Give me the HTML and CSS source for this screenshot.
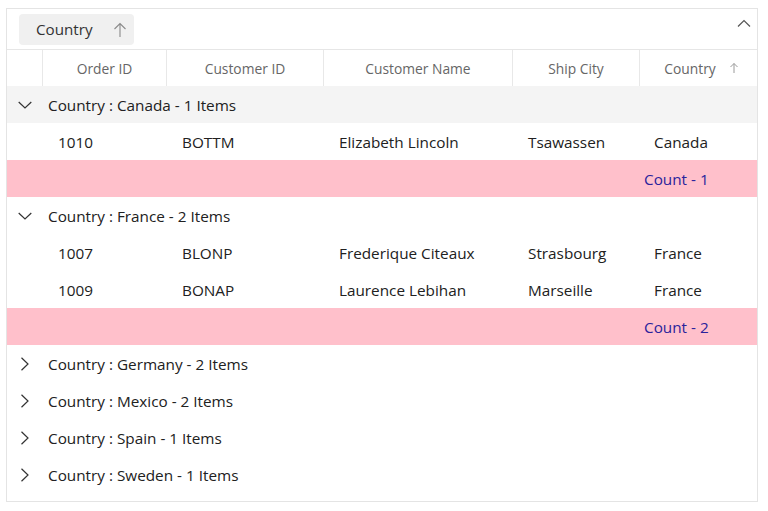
FILE: index.html
```html
<!DOCTYPE html>
<html>
<head>
<meta charset="utf-8">
<link rel="stylesheet" href="styles.css">
</head>
<body>
<div class="grid">
  <div class="drop">
    <div class="chip">
      <span class="chip-text">Country</span>
      <svg class="chip-arrow" width="14" height="16" viewBox="0 0 14 16"><path d="M7 15V1.5M1.5 7L7 1.5L12.5 7" fill="none" stroke="#8a8a8a" stroke-width="1.1"/></svg>
    </div>
    <svg class="collapse" width="14" height="9" viewBox="0 0 14 9"><path d="M1 7.5L7 1.5L13 7.5" fill="none" stroke="#555" stroke-width="1.2"/></svg>
  </div>
  <div class="row header">
    <div class="cell indent"></div>
    <div class="cell hc">Order ID</div>
    <div class="cell hc">Customer ID</div>
    <div class="cell hc">Customer Name</div>
    <div class="cell hc">Ship City</div>
    <div class="cell hc last">Country<svg class="hsort" width="10" height="12" viewBox="0 0 10 12"><path d="M5 11V1.5M1.5 5L5 1.5L8.5 5" fill="none" stroke="#9a9a9a" stroke-width="1"/></svg></div>
  </div>

  <div class="caption active">
    <svg class="chev" width="14" height="14" viewBox="0 0 14 14"><path d="M0.7 4L7 10L13.3 4" fill="none" stroke="#333" stroke-width="1.2"/></svg>
    <span>Country : Canada - 1 Items</span>
  </div>
  <div class="row data">
    <div class="cell indent"></div>
    <div class="cell">1010</div>
    <div class="cell">BOTTM</div>
    <div class="cell">Elizabeth Lincoln</div>
    <div class="cell">Tsawassen</div>
    <div class="cell">Canada</div>
  </div>
  <div class="row summary">
    <div class="cell indent"></div>
    <div class="cell"></div>
    <div class="cell"></div>
    <div class="cell"></div>
    <div class="cell"></div>
    <div class="cell count">Count - 1</div>
  </div>

  <div class="caption">
    <svg class="chev" width="14" height="14" viewBox="0 0 14 14"><path d="M0.7 4L7 10L13.3 4" fill="none" stroke="#333" stroke-width="1.2"/></svg>
    <span>Country : France - 2 Items</span>
  </div>
  <div class="row data">
    <div class="cell indent"></div>
    <div class="cell">1007</div>
    <div class="cell">BLONP</div>
    <div class="cell">Frederique Citeaux</div>
    <div class="cell">Strasbourg</div>
    <div class="cell">France</div>
  </div>
  <div class="row data">
    <div class="cell indent"></div>
    <div class="cell">1009</div>
    <div class="cell">BONAP</div>
    <div class="cell">Laurence Lebihan</div>
    <div class="cell">Marseille</div>
    <div class="cell">France</div>
  </div>
  <div class="row summary">
    <div class="cell indent"></div>
    <div class="cell"></div>
    <div class="cell"></div>
    <div class="cell"></div>
    <div class="cell"></div>
    <div class="cell count">Count - 2</div>
  </div>

  <div class="caption">
    <svg class="chev" width="14" height="14" viewBox="0 0 14 14"><path d="M3.5 0.7L10 7L3.5 13.3" fill="none" stroke="#333" stroke-width="1.2"/></svg>
    <span>Country : Germany - 2 Items</span>
  </div>
  <div class="caption">
    <svg class="chev" width="14" height="14" viewBox="0 0 14 14"><path d="M3.5 0.7L10 7L3.5 13.3" fill="none" stroke="#333" stroke-width="1.2"/></svg>
    <span>Country : Mexico - 2 Items</span>
  </div>
  <div class="caption">
    <svg class="chev" width="14" height="14" viewBox="0 0 14 14"><path d="M3.5 0.7L10 7L3.5 13.3" fill="none" stroke="#333" stroke-width="1.2"/></svg>
    <span>Country : Spain - 1 Items</span>
  </div>
  <div class="caption">
    <svg class="chev" width="14" height="14" viewBox="0 0 14 14"><path d="M3.5 0.7L10 7L3.5 13.3" fill="none" stroke="#333" stroke-width="1.2"/></svg>
    <span>Country : Sweden - 1 Items</span>
  </div>
</div>
</body>
</html>
```
FILE: styles.css
```css
html, body {
  margin: 0;
  padding: 0;
  background: #ffffff;
}
body {
  font-family: "Open Sans", "Noto Sans", sans-serif;
  color: #212121;
}
.grid {
  margin: 8px 0 0 6px;
  width: 750px;
  height: 492px;
  border: 1px solid #e4e4e4;
  background: #fff;
  overflow: hidden;
}
.drop {
  height: 40px;
  border-bottom: 1px solid #e6e6e6;
  display: flex;
  align-items: flex-start;
  justify-content: space-between;
  padding: 0 0 0 12px;
}
.chip {
  margin-top: 5px;
  width: 115px;
  height: 31px;
  box-sizing: border-box;
  background: #f0f0f0;
  border-radius: 4px;
  display: flex;
  align-items: center;
  padding-left: 17px;
}
.chip-text {
  font-size: 15.2px;
  color: #333;
  line-height: 20px;
  margin-top: -1px;
}
.chip-arrow {
  margin-left: 20px;
}
.collapse {
  margin-top: 10px;
  margin-right: 6px;
}
.row {
  display: grid;
  grid-template-columns: 36px 124px 157px 189px 127px 117px;
  height: 37px;
}
.cell {
  display: flex;
  align-items: center;
  padding-left: 15px;
  font-size: 15.3px;
  white-space: nowrap;
  padding-top: 1px;
  box-sizing: border-box;
}
.cell.indent {
  padding: 0;
}
.header {
  height: 36px;
}
.header .cell {
  border-right: 1px solid #e8e8e8;
  justify-content: center;
  padding: 0;
  font-size: 13.8px;
  color: #666;
}
.header .cell.last {
  border-right: none;
  padding-left: 6px;
}
.hsort {
  margin-left: 13px;
}
.data .cell:last-child {
  padding-left: 14px;
}
.summary {
  background: #ffc0cb;
}
.count {
  color: #2a239c;
  padding-left: 4px;
}
.caption {
  height: 37px;
  display: flex;
  align-items: center;
  font-size: 15.3px;
  color: #212121;
  box-sizing: border-box;
  padding-top: 1px;
}
.caption.active {
  background: #f4f4f4;
}
.chev {
  margin-left: 11px;
  margin-right: 16px;
}
```
